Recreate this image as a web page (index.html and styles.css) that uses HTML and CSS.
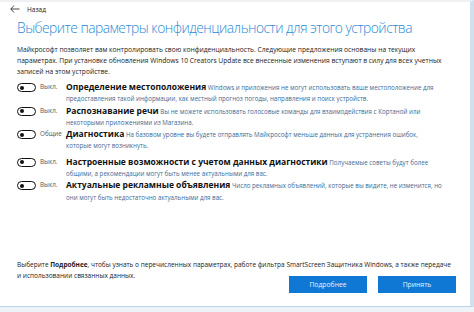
FILE: index.html
```html
<!DOCTYPE html>
<html lang="ru">
<head>
<meta charset="utf-8">
<link rel="stylesheet" href="styles.css">
</head>
<body>
<div class="window">
  <div class="topbar">
    <svg class="back" width="10" height="8" viewBox="0 0 10 8"><path d="M4 0.5 L0.8 4 L4 7.5 M0.8 4 H9.5" fill="none" stroke="#333" stroke-width="0.9"/></svg>
    <span class="back-label">Назад</span>
  </div>
  <div class="content">
    <h1 class="title">Выберите параметры конфиденциальности для этого устройства</h1>
    <p class="intro">Майкрософт позволяет вам контролировать свою конфиденциальность. Следующие предложения основаны на текущих параметрах. При установке обновления Windows 10 Creators Update все внесенные изменения вступают в силу для всех учетных записей на этом устройстве.</p>

    <div class="options">
      <div class="option">
        <div class="toggle"><span class="knob"></span></div>
        <span class="state">Выкл.</span>
        <p class="text"><b>Определение местоположения</b> <span class="desc">Windows и приложения не могут использовать ваше местоположение для предоставления такой информации, как местный прогноз погоды, направления и поиск устройств.</span></p>
      </div>
      <div class="option">
        <div class="toggle"><span class="knob"></span></div>
        <span class="state">Выкл.</span>
        <p class="text"><b>Распознавание речи</b> <span class="desc">Вы не можете использовать голосовые команды для взаимодействия с Кортаной или некоторыми приложениями из Магазина.</span></p>
      </div>
      <div class="option">
        <div class="toggle"><span class="knob"></span></div>
        <span class="state">Общие</span>
        <p class="text"><b>Диагностика</b> <span class="desc">На базовом уровне вы будете отправлять Майкрософт меньше данных для устранения ошибок, которые могут возникнуть.</span></p>
      </div>
      <div class="option gap">
        <div class="toggle"><span class="knob"></span></div>
        <span class="state">Выкл.</span>
        <p class="text"><b>Настроенные возможности с учетом данных диагностики</b> <span class="desc">Получаемые советы будут более общими, а рекомендации могут быть менее актуальными для вас.</span></p>
      </div>
      <div class="option">
        <div class="toggle"><span class="knob"></span></div>
        <span class="state">Выкл.</span>
        <p class="text"><b>Актуальные рекламные объявления</b> <span class="desc">Число рекламных объявлений, которые вы видите, не изменится, но они могут быть недостаточно актуальными для вас.</span></p>
      </div>
    </div>

    <div class="footer">
      <p class="note">Выберите <b>Подробнее</b>, чтобы узнать о перечисленных параметрах, работе фильтра SmartScreen Защитника Windows, а также передаче и использовании связанных данных.</p>
      <div class="buttons">
        <button class="btn">Подробнее</button>
        <button class="btn">Принять</button>
      </div>
    </div>
  </div>
</div>
</body>
</html>
```

FILE: styles.css
```css
* { box-sizing: border-box; }
html, body { margin: 0; padding: 0; }
body {
  width: 474px;
  height: 312px;
  background: #eef3f7;
  font-family: "Open Sans", "Noto Sans", sans-serif;
  color: #1a1a1a;
  overflow: hidden;
}
.window {
  width: 474px;
  height: 307px;
  background: #ffffff;
  border-top: 2px solid #eef2f5;
  border-right: 4px solid #cfe0ee;
  border-bottom: 1px solid #b9d2e6;
  display: flex;
  flex-direction: column;
}
.topbar {
  display: flex;
  align-items: center;
  height: 12px;
  margin-top: 1px;
  padding-left: 10px;
  gap: 7px;
}
.back { display: block; }
.back-label { font-size: 6.5px; color: #222; }
.content {
  padding: 0 0 0 17px;
  flex: 1;
  display: flex;
  flex-direction: column;
}
.title {
  margin: 2px 0 0 0;
  font-size: 13.8px;
  font-weight: 300;
  color: #2a8ad6;
  line-height: 22px;
  letter-spacing: -0.5px;
  white-space: nowrap;
}
.intro {
  margin: 5px 0 0 0;
  font-size: 6.7px;
  line-height: 11px;
  color: #222;
  width: 425px;
}
.options {
  margin-top: 4px;
  display: flex;
  flex-direction: column;
  gap: 0;
}
.option {
  display: flex;
  align-items: flex-start;
}
.option.gap { margin-top: 4px; }
.toggle {
  width: 19px;
  height: 9px;
  border: 1.3px solid #111;
  border-radius: 5px;
  margin-top: 2px;
  flex: none;
  position: relative;
}
.knob {
  position: absolute;
  left: 2px;
  top: 1.5px;
  width: 4px;
  height: 4px;
  border-radius: 50%;
  background: #111;
}
.state {
  width: 30px;
  flex: none;
  padding-left: 4px;
  font-size: 6.3px;
  color: #555;
  line-height: 12px;
}
.text {
  margin: 0;
  width: 376px;
  font-size: 6.2px;
  line-height: 11.3px;
}
.text b {
  font-size: 8.5px;
  font-weight: 700;
  color: #111;
}
.desc { color: #3c6a95; }
.footer {
  margin-top: auto;
  margin-bottom: 13px;
}
.note {
  margin: 0;
  font-size: 6.5px;
  line-height: 11px;
  color: #222;
  width: 438px;
}
.buttons {
  display: flex;
  justify-content: flex-end;
  gap: 11px;
  padding-right: 14px;
  margin-top: -5px;
}
.btn {
  width: 78px;
  height: 17px;
  border: none;
  background: #0f78d4;
  color: #e8f2fb;
  font-family: inherit;
  font-size: 6.8px;
  padding: 0;
}
```
